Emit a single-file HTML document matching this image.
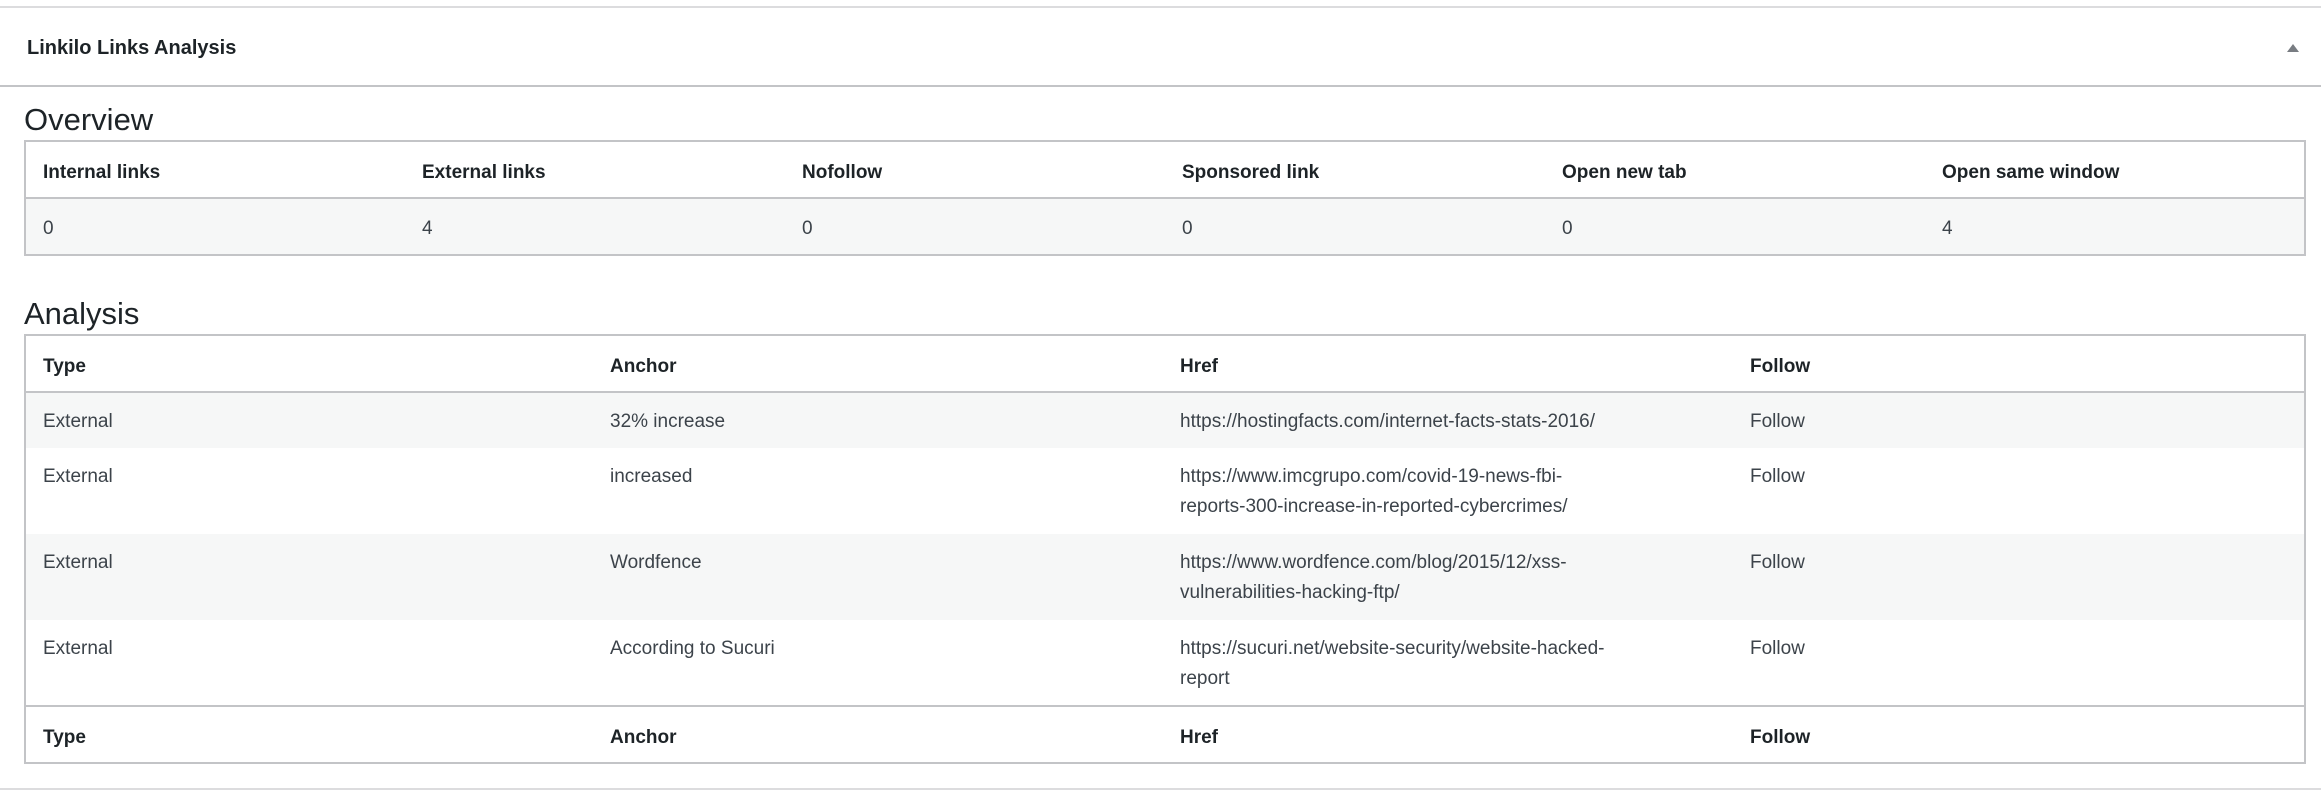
<!DOCTYPE html>
<html><head><meta charset="utf-8"><style>
*{box-sizing:border-box;margin:0;padding:0}
body{width:2321px;height:804px;background:#fff;font-family:"Liberation Sans",sans-serif;color:#3c434a;position:relative;overflow:hidden}
.topline{position:absolute;left:0;right:0;top:6px;height:2px;background:#dcdcde}
.hdr{position:absolute;left:0;right:0;top:8px;height:79px;border-bottom:2px solid #c3c4c7}
.hdr span{position:absolute;left:27px;top:29px;font-size:20px;font-weight:bold;color:#1d2327}
.arrow{position:absolute;left:2287px;top:36px;width:0;height:0;border-left:6px solid transparent;border-right:6px solid transparent;border-bottom:8px solid #787c82}
h2{position:absolute;left:24px;font-size:31px;font-weight:normal;color:#1d2327}
table{position:absolute;left:24px;width:2282px;border:2px solid #c3c4c7;border-collapse:collapse;font-size:19px}
th{text-align:left;font-weight:bold;color:#1d2327;padding:6px 0 0 17px;height:57px}
td{padding:0 0 0 17px;vertical-align:top;line-height:30px}
thead th{border-bottom:2px solid #c3c4c7}
tfoot th{border-top:2px solid #c3c4c7}
.alt{background:#f6f7f7}
.bot{position:absolute;left:0;right:0;top:788px;height:2px;background:#dcdcde}
</style></head><body>
<div class="topline"></div>
<div class="hdr"><span>Linkilo Links Analysis</span><div class="arrow"></div></div>
<h2 style="top:102px">Overview</h2>
<table style="top:140px">
<thead><tr><th style="width:380px">Internal links</th><th style="width:380px">External links</th><th style="width:380px">Nofollow</th><th style="width:380px">Sponsored link</th><th style="width:380px">Open new tab</th><th>Open same window</th></tr></thead>
<tbody><tr class="alt" style="height:57px"><td style="padding-top:15px">0</td><td style="padding-top:15px">4</td><td style="padding-top:15px">0</td><td style="padding-top:15px">0</td><td style="padding-top:15px">0</td><td style="padding-top:15px">4</td></tr></tbody>
</table>
<h2 style="top:296px">Analysis</h2>
<table style="top:334px">
<thead><tr><th style="width:568px">Type</th><th style="width:570px">Anchor</th><th style="width:570px">Href</th><th>Follow</th></tr></thead>
<tbody>
<tr class="alt" style="height:56px"><td style="padding-top:14px">External</td><td style="padding-top:14px">32% increase</td><td style="padding-top:14px">https://hostingfacts.com/internet-facts-stats-2016/</td><td style="padding-top:14px">Follow</td></tr>
<tr style="height:86px"><td style="padding-top:14px">External</td><td style="padding-top:14px">increased</td><td style="padding-top:14px;padding-right:20px">https://www.imcgrupo.com/covid-19-news-fbi-<br>reports-300-increase-in-reported-cybercrimes/</td><td style="padding-top:14px">Follow</td></tr>
<tr class="alt" style="height:86px"><td style="padding-top:14px">External</td><td style="padding-top:14px">Wordfence</td><td style="padding-top:14px">https://www.wordfence.com/blog/2015/12/xss-<br>vulnerabilities-hacking-ftp/</td><td style="padding-top:14px">Follow</td></tr>
<tr style="height:86px"><td style="padding-top:14px">External</td><td style="padding-top:14px">According to Sucuri</td><td style="padding-top:14px">https://sucuri.net/website-security/website-hacked-<br>report</td><td style="padding-top:14px">Follow</td></tr>
</tbody>
<tfoot><tr><th>Type</th><th>Anchor</th><th>Href</th><th>Follow</th></tr></tfoot>
</table>
<div class="bot"></div>
</body></html>
